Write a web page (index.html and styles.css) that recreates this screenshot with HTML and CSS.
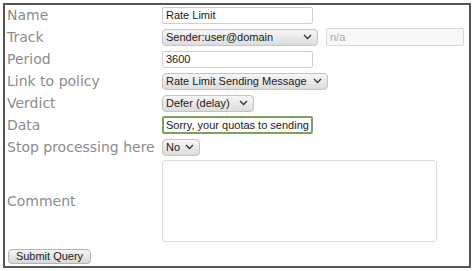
FILE: index.html
```html
<!DOCTYPE html>
<html>
<head>
<meta charset="utf-8">
<link rel="stylesheet" href="styles.css">
</head>
<body>
<div class="frame">
  <form class="form">
    <label class="lbl">Name</label>
    <div class="ctl"><input class="txt w151" type="text" value="Rate Limit"></div>

    <label class="lbl">Track</label>
    <div class="ctl">
      <select class="sel w156"><option>Sender:user@domain</option></select>
      <input class="txt na" type="text" value="n/a">
    </div>

    <label class="lbl">Period</label>
    <div class="ctl"><input class="txt w151" type="text" value="3600"></div>

    <label class="lbl">Link to policy</label>
    <div class="ctl"><select class="sel w166"><option>Rate Limit Sending Message</option></select></div>

    <label class="lbl">Verdict</label>
    <div class="ctl"><select class="sel w92"><option>Defer (delay)</option></select></div>

    <label class="lbl">Data</label>
    <div class="ctl"><input class="txt w151 focus" type="text" value="Sorry, your quotas to sending"></div>

    <label class="lbl">Stop processing here</label>
    <div class="ctl"><select class="sel w38"><option>No</option></select></div>

    <label class="lbl">Comment</label>
    <div class="ctl ctl-area"><textarea class="area"></textarea></div>

    <div class="submit-row"><button type="button" class="btn">Submit Query</button></div>
  </form>
</div>
</body>
</html>
```
FILE: styles.css
```css
html, body {
  margin: 0;
  padding: 0;
  background: #ffffff;
}
.frame {
  box-sizing: border-box;
  width: 468px;
  height: 265px;
  margin: 3px;
  border: 2px solid #555555;
  padding: 1px 0 0 2px;
}
.form {
  display: grid;
  grid-template-columns: 155px 1fr;
  row-gap: 4px;
  align-items: center;
}
.lbl {
  font-family: "DejaVu Sans", sans-serif;
  font-size: 14px;
  color: #8c8c8c;
  line-height: 18px;
  white-space: nowrap;
}
.ctl {
  display: flex;
  align-items: center;
  gap: 8px;
  height: 18px;
}
.ctl-area {
  height: auto;
}
.txt {
  box-sizing: border-box;
  height: 17px;
  margin: 0;
  padding: 0 3px;
  border: 1px solid #cfcfcf;
  border-radius: 2px;
  font-family: "Liberation Sans", Arial, sans-serif;
  font-size: 11px;
  color: #1a1a1a;
  background: #ffffff;
  outline: none;
}
.w151 { width: 151px; }
.na {
  width: 138px;
  height: 18px;
  background: #f8f8f8;
  color: #aaaaaa;
  border-color: #d8d8d8;
}
.focus {
  height: 18px;
  border: 2px solid #7aa35c;
  padding: 0 2px;
}
.sel {
  box-sizing: border-box;
  appearance: none;
  -webkit-appearance: none;
  height: 17px;
  margin: 0;
  padding: 0 3px;
  border: 1px solid #c4c4c4;
  border-radius: 4px;
  font-family: "Liberation Sans", Arial, sans-serif;
  font-size: 11px;
  color: #1a1a1a;
  background-color: #e6e6e6;
  background-image:
    url("data:image/svg+xml,%3Csvg xmlns='http://www.w3.org/2000/svg' width='9' height='6' viewBox='0 0 9 6'%3E%3Cpath d='M1 1 L4.5 4.5 L8 1' fill='none' stroke='%23333' stroke-width='1.3'/%3E%3C/svg%3E"),
    linear-gradient(#f6f6f6, #dcdcdc);
  background-repeat: no-repeat, no-repeat;
  background-position: right 5px center, 0 0;
  outline: none;
}
.w156 { width: 156px; }
.w166 { width: 166px; }
.w92 { width: 92px; }
.w38 { width: 38px; }
.area {
  display: block;
  box-sizing: border-box;
  width: 275px;
  height: 82px;
  margin: 0;
  border: 1px solid #dcdcdc;
  border-radius: 3px;
  resize: none;
  background: #ffffff;
}
.submit-row {
  grid-column: 1 / 3;
  display: flex;
  padding-top: 3px;
  padding-left: 1px;
}
.btn {
  box-sizing: border-box;
  width: 83px;
  height: 15px;
  margin: 0;
  padding: 0;
  border: 1px solid #b4b4b4;
  border-radius: 4px;
  background: linear-gradient(#f4f4f4, #d8d8d8);
  font-family: "Liberation Sans", Arial, sans-serif;
  font-size: 11px;
  line-height: 13px;
  color: #1a1a1a;
}
```
